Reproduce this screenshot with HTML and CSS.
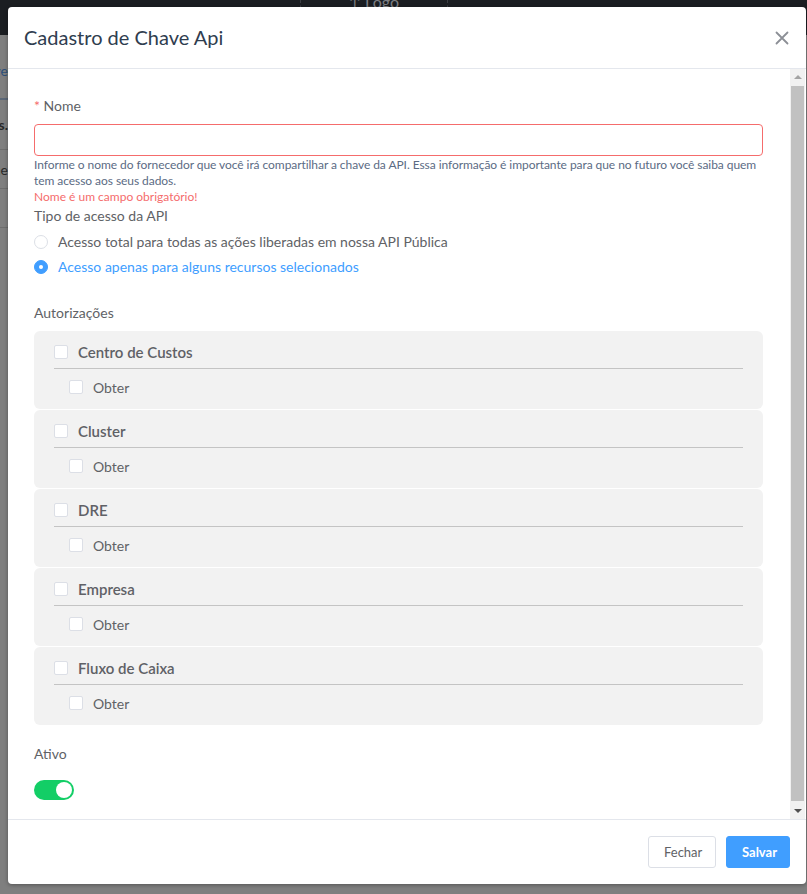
FILE: index.html
```html
<!DOCTYPE html>
<html lang="pt-BR">
<head>
    <meta charset="UTF-8">
    <meta name="viewport" content="width=device-width, initial-scale=1.0">
    <title>Cadastro de Chave Api</title>
    <link rel="stylesheet" href="styles.css">
</head>
<body>
    <!-- Page behind the dialog (dimmed) -->
    <div class="page">
        <div class="navbar">
            <span class="nav-sep"></span>
            <span class="nav-logo">&#8593; Logo</span>
            <span class="nav-sep"></span>
        </div>
        <div class="page-side">
            <div class="side-row side-link">Chave</div>
            <div class="side-row side-strong">Ações.</div>
            <div class="side-row">Nome</div>
            <div class="side-row"></div>
        </div>
    </div>

    <!-- Dialog -->
    <div class="modal">
        <div class="modal-header">
            <h2 class="modal-title">Cadastro de Chave Api</h2>
            <button class="modal-close" aria-label="Fechar">
                <svg width="14" height="14" viewBox="0 0 14 14">
                    <path d="M1.5 1.5 L12.5 12.5 M12.5 1.5 L1.5 12.5" stroke="#8c8f96" stroke-width="1.8" stroke-linecap="round"/>
                </svg>
            </button>
        </div>

        <div class="modal-body">
            <div class="modal-content">
                <div class="field-label"><span class="required">*</span> Nome</div>
                <input type="text" class="text-input is-error">
                <div class="help-text">Informe o nome do fornecedor que você irá compartilhar a chave da API. Essa informação é importante para que no futuro você saiba quem tem acesso aos seus dados.</div>
                <div class="error-text">Nome é um campo obrigatório!</div>

                <div class="field-label label-tight">Tipo de acesso da API</div>
                <div class="radio-list">
                    <label class="radio-row">
                        <span class="radio"></span>
                        <span>Acesso total para todas as ações liberadas em nossa API Pública</span>
                    </label>
                    <label class="radio-row checked">
                        <span class="radio"></span>
                        <span>Acesso apenas para alguns recursos selecionados</span>
                    </label>
                </div>

                <div class="field-label label-section">Autorizações</div>
                <div class="groups">
                    <div class="group">
                        <div class="group-head"><span class="checkbox"></span>Centro de Custos</div>
                        <div class="group-item"><span class="checkbox"></span>Obter</div>
                    </div>
                    <div class="group">
                        <div class="group-head"><span class="checkbox"></span>Cluster</div>
                        <div class="group-item"><span class="checkbox"></span>Obter</div>
                    </div>
                    <div class="group">
                        <div class="group-head"><span class="checkbox"></span>DRE</div>
                        <div class="group-item"><span class="checkbox"></span>Obter</div>
                    </div>
                    <div class="group">
                        <div class="group-head"><span class="checkbox"></span>Empresa</div>
                        <div class="group-item"><span class="checkbox"></span>Obter</div>
                    </div>
                    <div class="group">
                        <div class="group-head"><span class="checkbox"></span>Fluxo de Caixa</div>
                        <div class="group-item"><span class="checkbox"></span>Obter</div>
                    </div>
                </div>

                <div class="field-label label-active">Ativo</div>
                <div class="switch is-on"><span class="switch-knob"></span></div>
            </div>

            <!-- Scrollbar -->
            <div class="scrollbar">
                <span class="scroll-arrow up"></span>
                <span class="scroll-thumb"></span>
                <span class="scroll-arrow down"></span>
            </div>
        </div>

        <div class="modal-footer">
            <button class="btn btn-default">Fechar</button>
            <button class="btn btn-primary">Salvar</button>
        </div>
    </div>
</body>
</html>
```

FILE: styles.css
```css
* {
    box-sizing: border-box;
}
body {
    margin: 0;
    font-family: Lato, "Noto Sans", Arial, sans-serif;
    background-color: #7f7f7f;
    height: 894px;
    overflow: hidden;
}

/* dimmed page */
.navbar {
    height: 35px;
    background-color: #1b1e22;
    display: flex;
    align-items: flex-start;
    padding-left: 300px;
}
.nav-sep {
    width: 1px;
    height: 35px;
    border-left: 1px dashed #3a3d42;
}
.nav-logo {
    width: 146px;
    text-align: center;
    color: #7d7f83;
    font-size: 16px;
    line-height: 16px;
    margin-top: -6px;
}
.page-side {
    width: 8px;
    overflow: hidden;
}
.side-row {
    height: 39px;
    border-bottom: 1px solid #6e6e6e;
    display: flex;
    justify-content: flex-end;
    align-items: center;
    font-size: 14px;
    color: #2a2a2a;
    white-space: nowrap;
}
.side-link {
    height: 65px;
    color: #2d4f7a;
    align-items: flex-start;
    padding-top: 27px;
    border-bottom: 2px solid #5b6777;
}
.side-strong {
    height: 50px;
    font-weight: bold;
}

/* dialog */
.modal {
    position: absolute;
    top: 7px;
    left: 8px;
    width: 798px;
    height: 877px;
    background-color: #fff;
    border-radius: 4px;
    box-shadow: 0 1px 4px rgba(0, 0, 0, 0.35);
    display: flex;
    flex-direction: column;
    overflow: hidden;
}
.modal-header {
    height: 62px;
    flex-shrink: 0;
    border-bottom: 1px solid #e4e7ed;
    display: flex;
    align-items: center;
    justify-content: space-between;
    padding: 0 17px 0 16px;
}
.modal-title {
    margin: 0;
    font-size: 20px;
    font-weight: normal;
    color: #2f3d4f;
    padding-bottom: 2px;
}
.modal-close {
    border: none;
    background: none;
    padding: 0;
    width: 14px;
    height: 14px;
    display: flex;
    cursor: pointer;
}

.modal-body {
    flex: 1;
    display: flex;
    overflow: hidden;
}
.modal-content {
    flex: 1;
    padding: 27px 27px 0 26px;
    overflow: hidden;
}

.field-label {
    font-size: 14px;
    line-height: 20px;
    color: #606266;
}
.required {
    color: #f56c6c;
}
.label-tight {
    margin-top: 1px;
}
.label-section {
    margin-top: 24px;
}
.label-active {
    margin-top: 19px;
}

.text-input {
    display: block;
    width: 100%;
    height: 32px;
    margin-top: 8px;
    border: 1px solid #dcdfe6;
    border-radius: 4px;
    padding: 0 12px;
    font-family: inherit;
    font-size: 14px;
    outline: none;
}
.text-input.is-error {
    border-color: #f56c6c;
}
.help-text, .error-text {
    font-size: 12px;
    line-height: 16px;
}
.help-text {
    margin-top: 1px;
    color: #5b6b84;
    letter-spacing: -0.06px;
}
.error-text {
    color: #f56c6c;
}

.radio-list {
    margin-top: 3px;
}
.radio-row {
    display: flex;
    align-items: center;
    height: 25px;
    font-size: 14px;
    color: #606266;
    cursor: pointer;
}
.radio {
    width: 14px;
    height: 14px;
    border: 1px solid #dcdfe6;
    border-radius: 50%;
    background-color: #fff;
    margin-right: 10px;
    position: relative;
}
.radio-row.checked {
    color: #409eff;
}
.radio-row.checked .radio {
    background-color: #409eff;
    border-color: #409eff;
}
.radio-row.checked .radio::after {
    content: "";
    position: absolute;
    width: 4px;
    height: 4px;
    border-radius: 50%;
    background-color: #fff;
    top: 4px;
    left: 4px;
}

.groups {
    margin-top: 8px;
}
.group {
    background-color: #f2f2f2;
    border-radius: 6px;
    padding: 11px 20px 12px;
    margin-bottom: 1px;
}
.group-head {
    display: flex;
    align-items: center;
    box-sizing: content-box;
    height: 20px;
    padding-bottom: 6px;
    border-bottom: 1px solid #c4c4c4;
    font-size: 15px;
    font-weight: 600;
    color: #5f6166;
}
.group-item {
    display: flex;
    align-items: center;
    height: 20px;
    margin-top: 8px;
    padding-left: 15px;
    font-size: 14px;
    color: #606266;
}
.checkbox {
    width: 14px;
    height: 14px;
    border: 1px solid #dcdfe6;
    border-radius: 2px;
    background-color: #fff;
    margin-right: 10px;
    flex-shrink: 0;
}

.switch {
    width: 40px;
    height: 20px;
    border-radius: 10px;
    background-color: #dcdfe6;
    margin-top: 16px;
    position: relative;
}
.switch.is-on {
    background-color: #13ce66;
}
.switch-knob {
    position: absolute;
    top: 2px;
    left: 2px;
    width: 16px;
    height: 16px;
    border-radius: 50%;
    background-color: #fff;
}
.switch.is-on .switch-knob {
    left: 22px;
}

/* fake scrollbar */
.scrollbar {
    width: 15px;
    margin-right: 1px;
    background-color: #f1f1f1;
    display: flex;
    flex-direction: column;
    align-items: center;
}
.scroll-arrow {
    width: 0;
    height: 0;
    border-left: 4px solid transparent;
    border-right: 4px solid transparent;
    flex-shrink: 0;
}
.scroll-arrow.up {
    border-bottom: 4px solid #a3a3a3;
    margin: 6px 0 7px;
}
.scroll-arrow.down {
    border-top: 4px solid #505050;
    margin: 8px 0 6px;
}
.scroll-thumb {
    width: 13px;
    flex: 1;
    background-color: #c1c1c1;
}

.modal-footer {
    height: 65px;
    flex-shrink: 0;
    border-top: 1px solid #e4e7ed;
    display: flex;
    justify-content: flex-end;
    align-items: flex-start;
    gap: 10px;
    padding: 16px 16px 0 0;
}
.btn {
    height: 32px;
    padding: 0 15px;
    border-radius: 3px;
    font-family: inherit;
    font-size: 13px;
    cursor: pointer;
}
.btn-default {
    width: 68px;
    background-color: #fff;
    border: 1px solid #dcdfe6;
    color: #606266;
}
.btn-primary {
    width: 64px;
    background-color: #409eff;
    border: 1px solid #409eff;
    color: #fff;
    font-weight: bold;
}
```
